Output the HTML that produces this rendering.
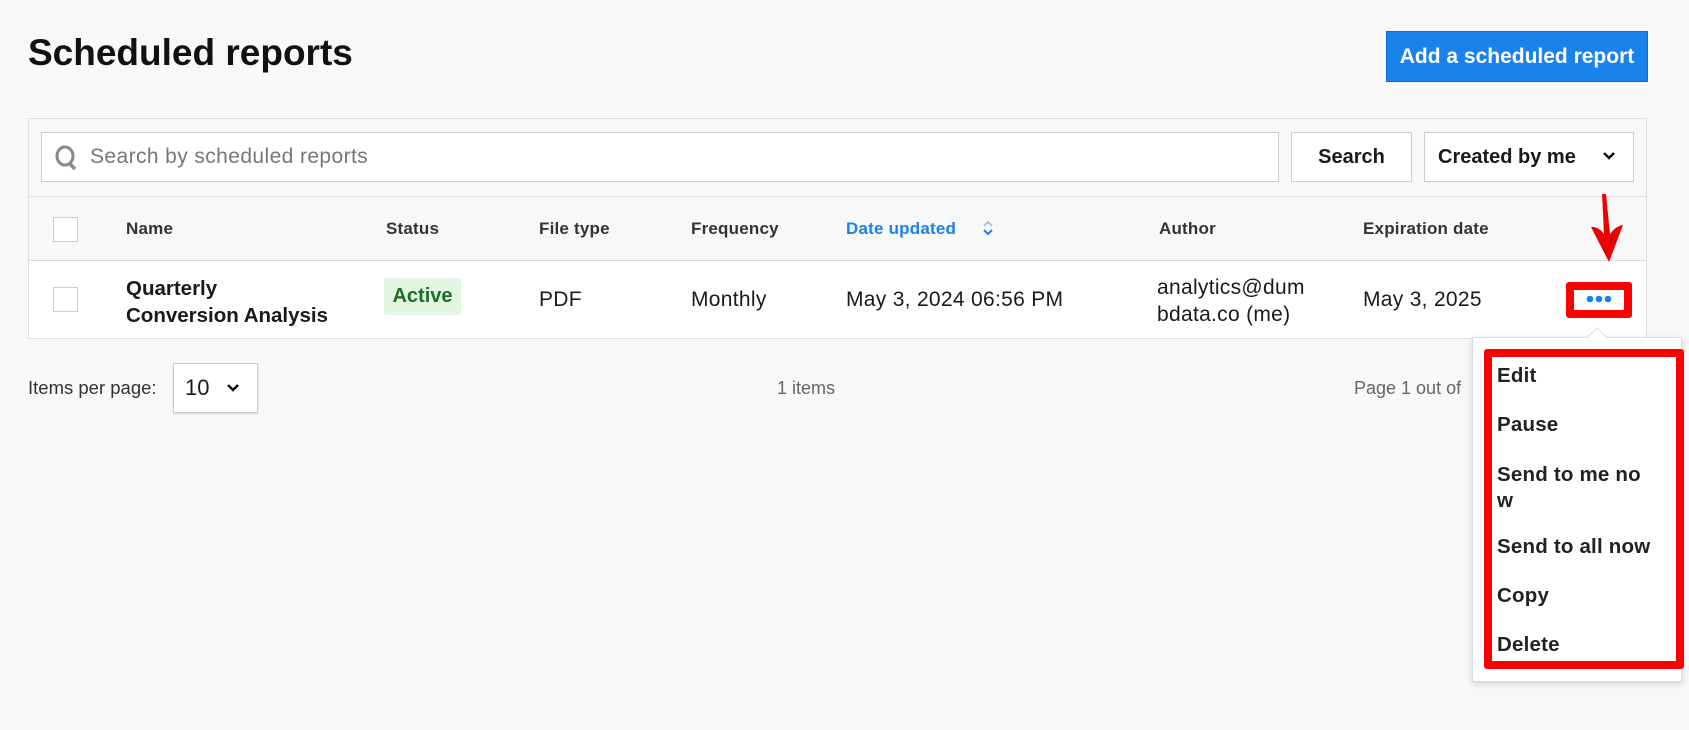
<!DOCTYPE html><html><head><meta charset="utf-8"><style>
*{margin:0;padding:0;box-sizing:border-box}
body{width:1689px;height:730px;background:#f8f8f8;font-family:"Liberation Sans",Arial,sans-serif;color:#1a1a1a;position:relative;overflow:hidden}
.a{position:absolute;white-space:nowrap}
.h{font-size:17px;font-weight:bold;color:#333;top:219px;letter-spacing:.2px}
.r{font-size:21px;color:#1a1a1a;letter-spacing:.3px}
.cb{position:absolute;width:25px;height:25px;border:1px solid #ccc;background:#fff}
.mi{position:absolute;left:1497px;font-size:20.5px;font-weight:bold;color:#222;letter-spacing:.2px}
</style></head><body>
<div class="a" style="left:28px;top:32px;font-size:37px;font-weight:bold;color:#111">Scheduled reports</div>
<div class="a" style="left:1386px;top:31px;width:262px;height:51px;background:#1a82ed;border:1px solid #0f6fd0;color:#fff;font-size:21px;font-weight:bold;text-align:center;line-height:49px">Add a scheduled report</div>
<div class="a" style="left:28px;top:118px;width:1619px;height:221px;border:1px solid #e0e0e0;background:#f8f8f8"></div>
<div class="a" style="left:29px;top:260px;width:1617px;height:78px;background:#fff;border-top:1px solid #ddd"></div>
<div class="a" style="left:29px;top:196px;width:1617px;height:1px;background:#ddd"></div>
<div class="a" style="left:41px;top:132px;width:1238px;height:50px;background:#fff;border:1px solid #ccc"></div>
<svg class="a" style="left:54px;top:145px" width="26" height="26" viewBox="0 0 26 26"><ellipse cx="11" cy="11" rx="8" ry="9" fill="none" stroke="#888" stroke-width="3"/><line x1="15" y1="18" x2="21" y2="24" stroke="#888" stroke-width="3.5"/></svg>
<div class="a" style="left:90px;top:145px;font-size:21px;color:#777;letter-spacing:.4px">Search by scheduled reports</div>
<div class="a" style="left:1291px;top:132px;width:121px;height:50px;background:#fff;border:1px solid #ccc;font-size:20px;font-weight:bold;text-align:center;line-height:48px">Search</div>
<div class="a" style="left:1424px;top:132px;width:210px;height:50px;background:#fff;border:1px solid #ccc;font-size:20px;font-weight:bold;line-height:48px;padding-left:13px">Created by me</div>
<svg class="a" style="left:1602px;top:151px" width="14" height="10"><polyline points="2,2 7,7 12,2" fill="none" stroke="#111" stroke-width="2.5"/></svg>
<div class="cb" style="left:53px;top:217px"></div>
<div class="a h" style="left:126px">Name</div>
<div class="a h" style="left:386px">Status</div>
<div class="a h" style="left:539px">File type</div>
<div class="a h" style="left:691px">Frequency</div>
<div class="a h" style="left:846px;color:#1a82ed">Date updated</div>
<svg class="a" style="left:982px;top:219px" width="12" height="18"><polyline points="2,7 6,3 10,7" fill="none" stroke="#9cc8f5" stroke-width="2"/><polyline points="2,11 6,15 10,11" fill="none" stroke="#1a82ed" stroke-width="2"/></svg>
<div class="a h" style="left:1159px">Author</div>
<div class="a h" style="left:1363px">Expiration date</div>
<div class="cb" style="left:53px;top:287px"></div>
<div class="a" style="left:126px;top:275px;font-size:20.5px;font-weight:bold;line-height:27px">Quarterly<br>Conversion Analysis</div>
<div class="a" style="left:384px;top:278px;width:77px;height:37px;background:#e3f5e3;border-radius:3px;color:#1e6e1e;font-size:20px;font-weight:bold;text-align:center;line-height:37px">Active</div>
<div class="a r" style="left:539px;top:288px">PDF</div>
<div class="a r" style="left:691px;top:288px">Monthly</div>
<div class="a r" style="left:846px;top:288px">May 3, 2024 06:56 PM</div>
<div class="a r" style="left:1157px;top:274px;line-height:27px">analytics@dum<br>bdata.co (me)</div>
<div class="a r" style="left:1363px;top:288px">May 3, 2025</div>
<div class="a" style="left:1566px;top:282px;width:66px;height:36px;border:8px solid #f00;border-radius:3px;background:#fff"></div>
<svg class="a" style="left:1585px;top:294px" width="30" height="10"><circle cx="5" cy="5" r="3.3" fill="#1a82ed"/><circle cx="14" cy="5" r="3.3" fill="#1a82ed"/><circle cx="23" cy="5" r="3.3" fill="#1a82ed"/></svg>
<svg class="a" style="left:1588px;top:192px" width="40" height="72"><path d="M14,2 L18,2 L22,42 Q28,34 35,33 L21,70 L3,35 Q10,34 16,42 Z" fill="#e00"/></svg>
<div class="a" style="left:28px;top:377px;font-size:18.5px;color:#333">Items per page:</div>
<div class="a" style="left:173px;top:363px;width:85px;height:50px;background:#fff;border:1px solid #ccc;box-shadow:0 1px 2px rgba(0,0,0,.15);font-size:22px;line-height:48px;padding-left:11px">10</div>
<svg class="a" style="left:226px;top:383px" width="14" height="10"><polyline points="2,2 7,7 12,2" fill="none" stroke="#111" stroke-width="2.5"/></svg>
<div class="a" style="left:777px;top:378px;font-size:18px;color:#666">1 items</div>
<div class="a" style="left:1354px;top:378px;font-size:18px;color:#666">Page 1 out of</div>
<div class="a" style="left:1472px;top:337px;width:210px;height:345px;background:#fff;border:1px solid #ddd;box-shadow:0 2px 6px rgba(0,0,0,.15)"></div>
<div class="a" style="left:1590px;top:330px;width:14px;height:14px;background:#fff;border-left:1px solid #ddd;border-top:1px solid #ddd;transform:rotate(45deg)"></div>
<div class="a" style="left:1484px;top:349px;width:200px;height:320px;border:8px solid #f00;border-radius:3px"></div>
<div class="mi" style="top:364px">Edit</div>
<div class="mi" style="top:413px">Pause</div>
<div class="mi" style="top:462px;line-height:26px">Send to me no<br>w</div>
<div class="mi" style="top:535px">Send to all now</div>
<div class="mi" style="top:584px">Copy</div>
<div class="mi" style="top:633px">Delete</div>
</body></html>
